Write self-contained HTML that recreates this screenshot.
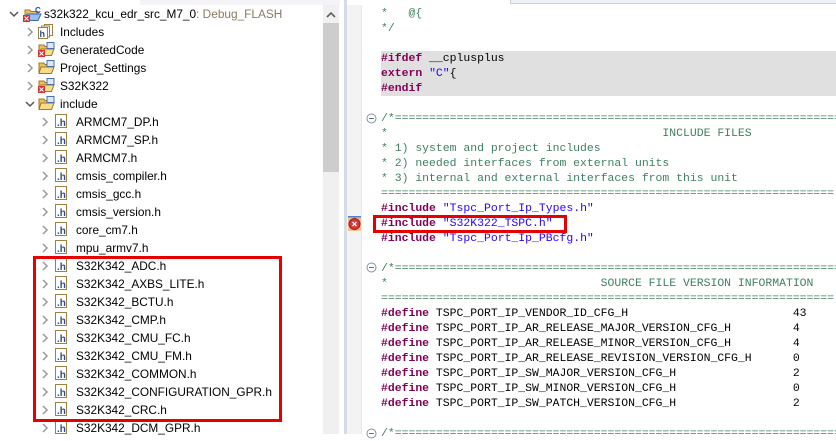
<!DOCTYPE html>
<html><head><meta charset="utf-8"><style>
*{margin:0;padding:0;box-sizing:border-box}
body{width:836px;height:434px;overflow:hidden;background:#fff;position:relative;font-family:"Liberation Sans",sans-serif}
.row{position:absolute;height:18px;line-height:18px;font-size:11.85px;color:#000;white-space:nowrap}
.chev{position:absolute;width:12px;height:18px}
.ic{position:absolute;top:2px}
.code{position:absolute;left:381px;font-family:"Liberation Mono",monospace;font-size:11.45px;line-height:15px;white-space:pre;color:#000}
.k{color:#7f0055;font-weight:bold}
.s{color:#2a00ff}
.c{color:#3f7f5f}
.ln{height:15px}
</style></head><body>
<div style="position:absolute;left:140px;top:0;width:200px;height:5px;background:#f4f4f8"></div>
<div style="position:absolute;left:510px;top:0;width:326px;height:4px;background:#eef1f6;border-bottom:1px solid #c8d0dc;border-left:1px solid #c8d0dc"></div>
<div style="position:absolute;left:323px;top:5px;width:16px;height:429px;background:#f0f0f0"></div>
<div style="position:absolute;left:323px;top:23px;width:16px;height:149px;background:#cdcdcd"></div>
<svg style="position:absolute;left:323px;top:8px" width="16" height="14"><path d="M4 9 L8 5 L12 9" fill="none" stroke="#606060" stroke-width="1.6"/></svg>
<div style="position:absolute;left:344px;top:0;width:3px;height:434px;background:#d5dbe8"></div>
<div style="position:absolute;left:347px;top:5px;width:14px;height:429px;background:#f3f3f3"></div>
<div style="position:absolute;left:361px;top:5px;width:1px;height:429px;background:#e8e8e8"></div>

<div id="tree"></div>
<script>
var rows=[
[0,'root','s32k322_kcu_edr_src_M7_0','open'],
[1,'inc','Includes'],[1,'proj','GeneratedCode'],[1,'fold','Project_Settings'],[1,'proj','S32K322'],[1,'fold','include','open'],
[2,'h','ARMCM7_DP.h'],[2,'h','ARMCM7_SP.h'],[2,'h','ARMCM7.h'],[2,'h','cmsis_compiler.h'],[2,'h','cmsis_gcc.h'],[2,'h','cmsis_version.h'],[2,'h','core_cm7.h'],[2,'h','mpu_armv7.h'],
[2,'h','S32K342_ADC.h'],[2,'h','S32K342_AXBS_LITE.h'],[2,'h','S32K342_BCTU.h'],[2,'h','S32K342_CMP.h'],[2,'h','S32K342_CMU_FC.h'],[2,'h','S32K342_CMU_FM.h'],[2,'h','S32K342_COMMON.h'],[2,'h','S32K342_CONFIGURATION_GPR.h'],[2,'h','S32K342_CRC.h'],[2,'h','S32K342_DCM_GPR.h']];
var icons={
h:'<svg width="13" height="15"><rect x="0.5" y="0.5" width="11" height="13" fill="#fff" stroke="#a08040"/><text x="2" y="12" font-family="Liberation Sans" font-size="10" font-weight="bold" fill="#2c4e8c">.h</text></svg>',
fold:'<svg width="18" height="15"><path d="M1 3h5l1 1.5h6v9H1z" fill="#e8c060" stroke="#a07820"/><path d="M3 7h13l-2.5 6.5H1z" fill="#f8dc88" stroke="#a07820"/><rect x="9" y="0.5" width="7" height="6" fill="#dce8f8" stroke="#4a70b0"/></svg>',
proj:'<svg width="18" height="15"><path d="M1 3h5l1 1.5h6v9H1z" fill="#e8c060" stroke="#a07820"/><path d="M3 7h13l-2.5 6.5H1z" fill="#f8dc88" stroke="#a07820"/><rect x="9" y="0.5" width="7" height="6" fill="#dce8f8" stroke="#4a70b0"/><rect x="0" y="8" width="7" height="7" fill="#d83030"/><path d="M1.5 9.5l4 4M5.5 9.5l-4 4" stroke="#fff"/></svg>',
root:'<svg width="22" height="16"><path d="M3 4h5l1 1.5h7v9H3z" fill="#e8c060" stroke="#a07820"/><path d="M5 8h14l-3 6.5H3z" fill="#9cc0ec" stroke="#3a68b0"/><text x="13" y="7" font-size="8" font-weight="bold" fill="#2a4aa0" font-family="Liberation Sans">C</text><rect x="1" y="9" width="7" height="7" fill="#d83030"/><path d="M2.5 10.5l4 4M6.5 10.5l-4 4" stroke="#fff"/></svg>',
inc:'<svg width="18" height="15"><rect x="6.5" y="0.5" width="8" height="11" fill="#fff" stroke="#a08040"/><rect x="3.5" y="2" width="8" height="11" fill="#fff" stroke="#a08040"/><rect x="0.5" y="3.5" width="9" height="11" fill="#fff" stroke="#a08040"/><text x="1.5" y="13" font-size="9" font-weight="bold" fill="#2c4e8c" font-family="Liberation Sans">h</text></svg>'};
var h='';
rows.forEach(function(r,i){
 var top=5+i*18, ind=[0,16,31][r[0]];
 var cx=8+ind, open=r[3]=='open';
 h+='<svg class="chev" style="left:'+cx+'px;top:'+top+'px" width="12" height="18">'+(open?'<path d="M2 7l4 4 4-4" fill="none" stroke="#555" stroke-width="1.5"/>':'<path d="M4 5l4 4-4 4" fill="none" stroke="#999" stroke-width="1.5"/>')+'</svg>';
 var ix=cx+14+(r[1]=='h'?2:0);
 h+='<div class="ic" style="position:absolute;left:'+ix+'px;top:'+(top+1)+'px">'+icons[r[1]]+'</div>';
 var tx=[44,60,76][r[0]];
 h+='<div class="row" style="left:'+tx+'px;top:'+top+'px">'+r[2]+(r[1]=='root'?'<span style="color:#8a7a60">: Debug_FLASH</span>':'')+'</div>';
});
document.getElementById('tree').innerHTML=h;
</script>
<div style="position:absolute;left:33px;top:256px;width:249px;height:166px;border:3px solid #e60000"></div>

<div style="position:absolute;left:381px;top:51px;width:455px;height:45px;background:#e0e0e0"></div>
<div class="code" style="top:6px"><div class="ln c">*   @{</div><div class="ln c">*/</div><div class="ln"> </div><div class="ln"><span class="k">#ifdef</span> __cplusplus</div><div class="ln"><span class="k">extern</span> <span class="s">"C"</span>{</div><div class="ln"><span class="k">#endif</span></div><div class="ln"> </div><div class="ln c">/*==================================================================</div><div class="ln c">*                                        INCLUDE FILES</div><div class="ln c">* 1) system and project includes</div><div class="ln c">* 2) needed interfaces from external units</div><div class="ln c">* 3) internal and external interfaces from this unit</div><div class="ln c">==================================================================</div><div class="ln"><span class="k">#include</span> <span class="s">"Tspc_Port_Ip_Types.h"</span></div><div class="ln"><span class="k">#include</span> <span class="s">"S32K322_TSPC.h"</span></div><div class="ln"><span class="k">#include</span> <span class="s">"Tspc_Port_Ip_PBcfg.h"</span></div><div class="ln"> </div><div class="ln c">/*==================================================================</div><div class="ln c">*                               SOURCE FILE VERSION INFORMATION</div><div class="ln c">==================================================================</div><div class="ln"><span class="k">#define</span> TSPC_PORT_IP_VENDOR_ID_CFG_H                        43</div><div class="ln"><span class="k">#define</span> TSPC_PORT_IP_AR_RELEASE_MAJOR_VERSION_CFG_H         4</div><div class="ln"><span class="k">#define</span> TSPC_PORT_IP_AR_RELEASE_MINOR_VERSION_CFG_H         4</div><div class="ln"><span class="k">#define</span> TSPC_PORT_IP_AR_RELEASE_REVISION_VERSION_CFG_H      0</div><div class="ln"><span class="k">#define</span> TSPC_PORT_IP_SW_MAJOR_VERSION_CFG_H                 2</div><div class="ln"><span class="k">#define</span> TSPC_PORT_IP_SW_MINOR_VERSION_CFG_H                 0</div><div class="ln"><span class="k">#define</span> TSPC_PORT_IP_SW_PATCH_VERSION_CFG_H                 2</div><div class="ln"> </div><div class="ln c">/*==================================================================</div></div>
<div style="position:absolute;left:373px;top:215px;width:194px;height:18px;border:3px solid #e60000"></div>
<svg style="position:absolute;left:348px;top:216px" width="13" height="15"><rect x="0" y="0" width="13" height="15" fill="#f0c090"/><rect x="0" y="0" width="13" height="1.5" fill="#4a80d0"/><circle cx="6.5" cy="8" r="5.5" fill="#d83838" stroke="#a02020"/><path d="M4.5 6l4 4M8.5 6l-4 4" stroke="#fff" stroke-width="1.3"/></svg>
<svg style="position:absolute;left:366px;top:113px" width="11" height="11"><circle cx="5.5" cy="5.5" r="4.5" fill="#fff" stroke="#8090a0"/><path d="M3 5.5h5" stroke="#607080"/></svg>
<svg style="position:absolute;left:366px;top:262px" width="11" height="11"><circle cx="5.5" cy="5.5" r="4.5" fill="#fff" stroke="#8090a0"/><path d="M3 5.5h5" stroke="#607080"/></svg>
<svg style="position:absolute;left:366px;top:428px" width="11" height="11"><circle cx="5.5" cy="5.5" r="4.5" fill="#fff" stroke="#8090a0"/><path d="M3 5.5h5" stroke="#607080"/></svg>
</body></html>
